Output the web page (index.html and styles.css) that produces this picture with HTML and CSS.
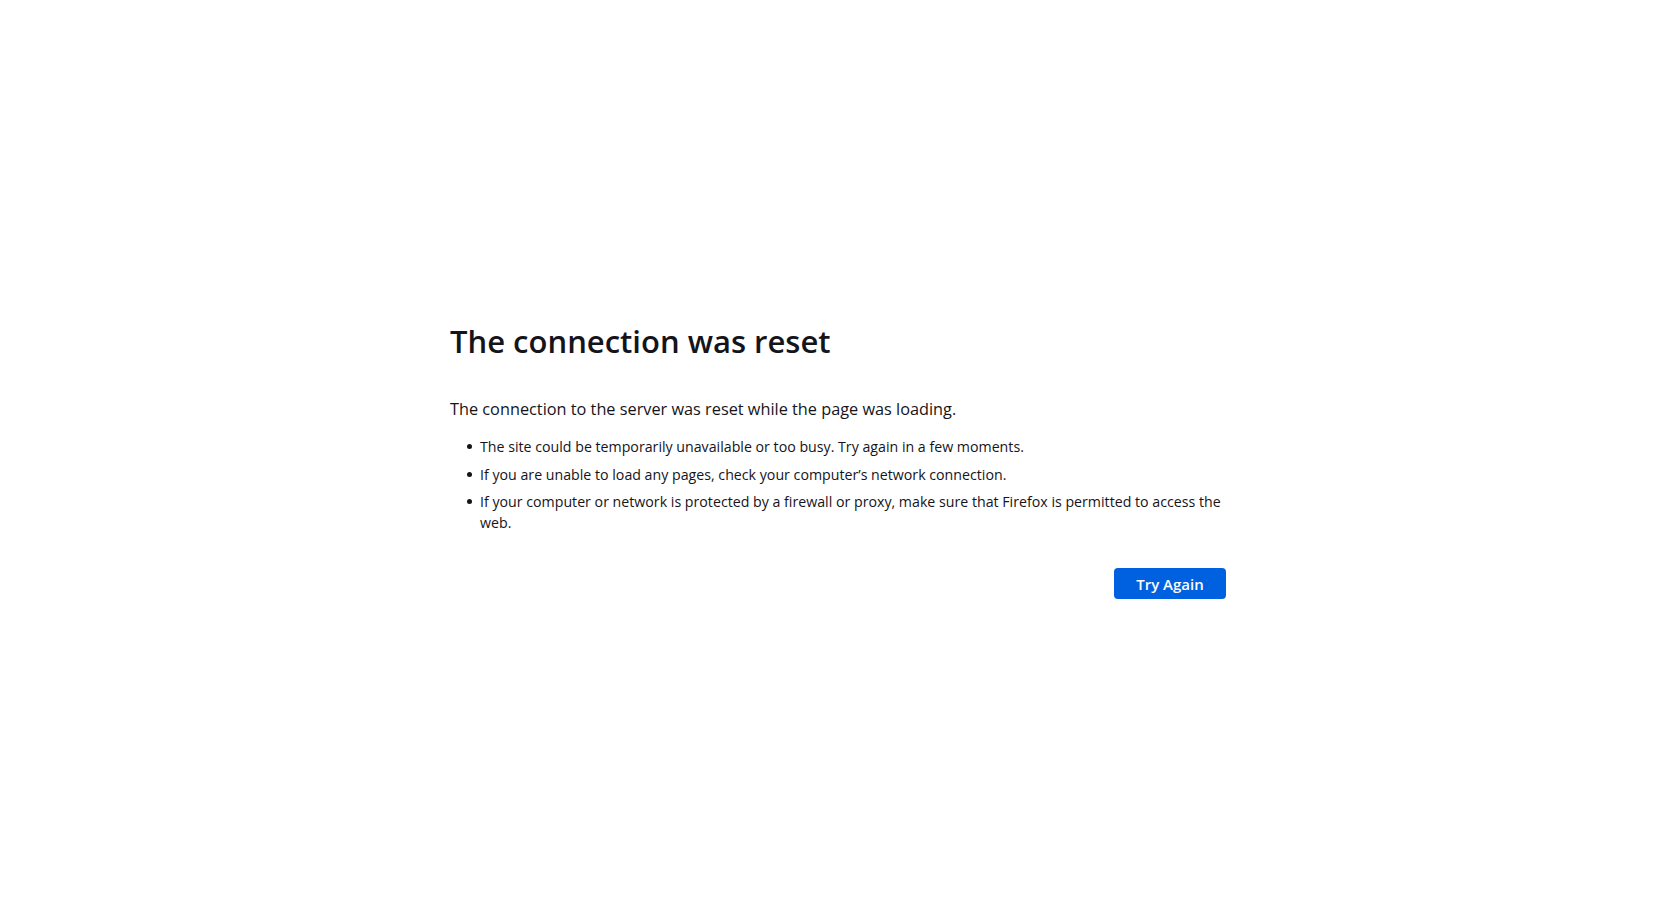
FILE: index.html
```html
<!DOCTYPE html>
<html lang="en">
  <head>
    <meta charset="utf-8" />
    <title>Problem loading page</title>
    <link rel="stylesheet" href="styles.css">
  </head>
  <body>
    <div class="container">
      <h1 class="title-text">The connection was reset</h1>
      <p class="short-desc">The connection to the server was reset while the page was loading.</p>
      <ul class="long-desc">
        <li>The site could be temporarily unavailable or too busy. Try again in a few moments.</li>
        <li>If you are unable to load any pages, check your computer’s network connection.</li>
        <li>If your computer or network is protected by a firewall or proxy, make sure that Firefox is permitted to access the web.</li>
      </ul>
      <div class="button-container">
        <button class="primary" id="tryAgain">Try Again</button>
      </div>
    </div>
  </body>
</html>
```

FILE: styles.css
```css
html, body {
  margin: 0;
  padding: 0;
}

body {
  font-family: "Open Sans", "Noto Sans", sans-serif;
  font-size: 15px;
  color: #15141a;
  background: #fff;
}

.container {
  width: 780px;
  margin: 0 auto;
  padding-top: 321px;
}

.title-text {
  font-size: 31px;
  font-weight: 600;
  line-height: 1.3;
  margin: 0 0 38px;
}

.short-desc {
  font-size: 16.3px;
  line-height: 1.3;
  margin: 0 0 16px;
}

.long-desc {
  margin: 0;
  padding-left: 30px;
  list-style: none;
}

.long-desc li {
  font-size: 14.2px;
  line-height: 21px;
  margin-bottom: 6.5px;
}

.long-desc li::before {
  content: "";
  display: inline-block;
  width: 5px;
  height: 5px;
  border-radius: 50%;
  background: #15141a;
  vertical-align: 3px;
  margin-left: -13.5px;
  margin-right: 8.5px;
}

.button-container {
  display: flex;
  justify-content: flex-end;
  margin-top: 35px;
  padding-right: 4px;
}

button {
  font-family: inherit;
  font-size: 15px;
  font-weight: 600;
  padding: 0;
  height: 31px;
  width: 112px;
  border: none;
  border-radius: 4px;
  background-color: #0061e0;
  color: #fbfbfe;
  cursor: pointer;
}

button:hover {
  background-color: #0250bb;
}
```
